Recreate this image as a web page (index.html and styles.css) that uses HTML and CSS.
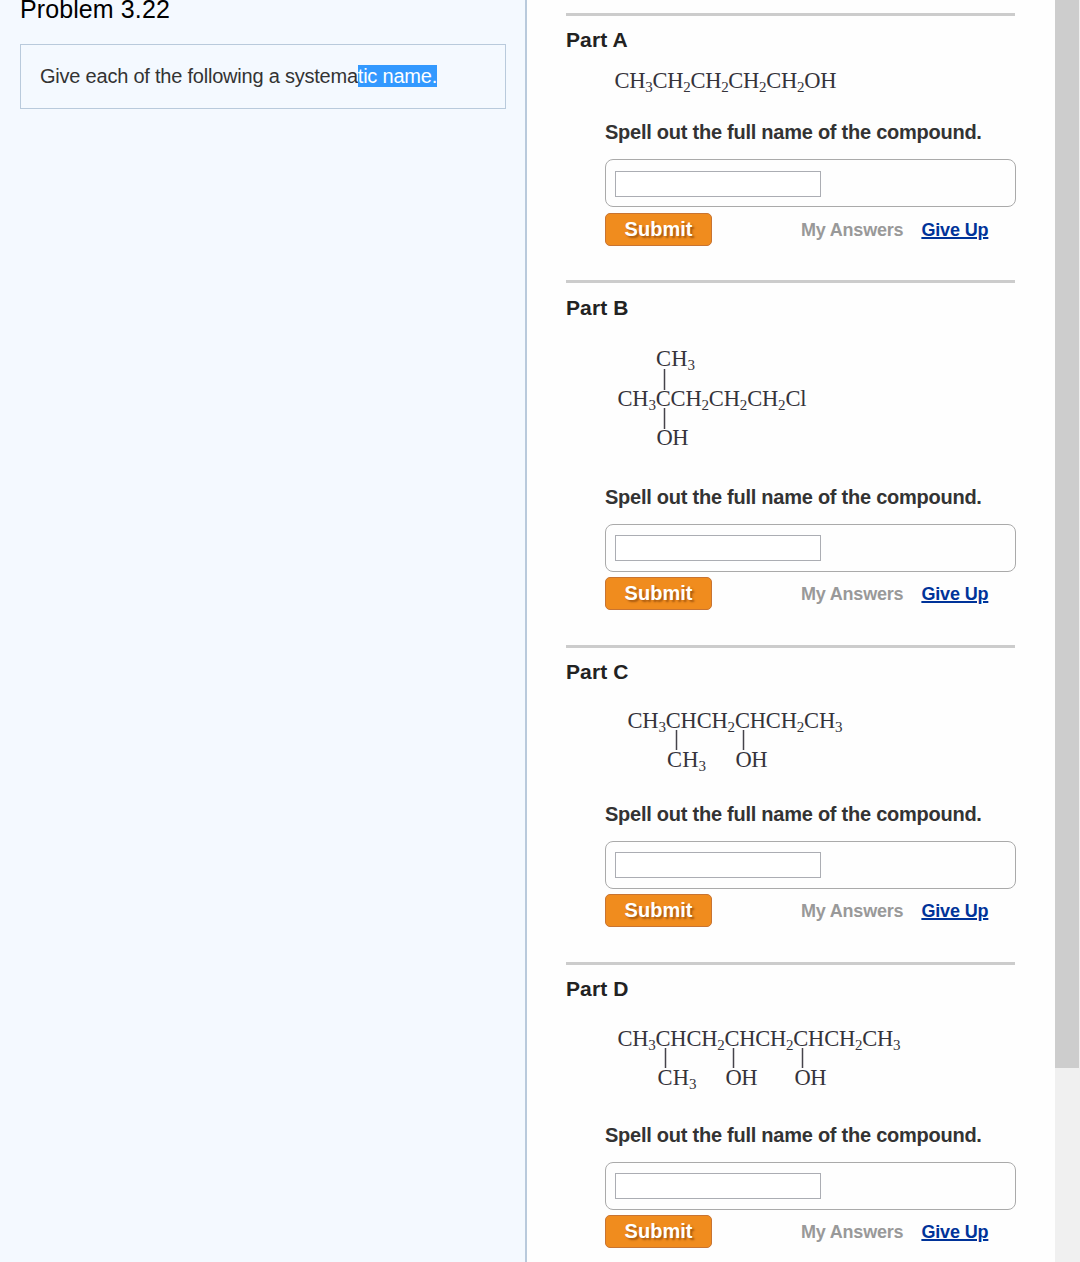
FILE: index.html
```html
<!DOCTYPE html>
<html lang="en">
<head>
    <meta charset="utf-8">
    <title>Problem 3.22</title>
    <link rel="stylesheet" href="styles.css">
</head>
<body>
    <div class="page">
        <div class="intro">
            <h1>Problem 3.22</h1>
            <div class="intro-box">Give each of the following a systema<span class="selected">tic name.</span></div>
        </div>

        <div class="parts">
            <div class="part part-a">
                <h2>Part A</h2>
                <div class="part-body">
                    <svg class="formula" width="411" height="68">
                        <text x="9.5" y="36" textLength="222">CH<tspan class="sub" dy="4">3</tspan><tspan dy="-4">CH</tspan><tspan class="sub" dy="4">2</tspan><tspan dy="-4">CH</tspan><tspan class="sub" dy="4">2</tspan><tspan dy="-4">CH</tspan><tspan class="sub" dy="4">2</tspan><tspan dy="-4">CH</tspan><tspan class="sub" dy="4">2</tspan><tspan dy="-4">OH</tspan></text>
                    </svg>
                    <p>Spell out the full name of the compound.</p>
                    <div class="answer"><input type="text"></div>
                    <div class="actions">
                        <button type="submit">Submit</button>
                        <span class="my-answers">My Answers</span>
                        <a href="#">Give Up</a>
                    </div>
                </div>
            </div>

            <div class="part part-b">
                <h2>Part B</h2>
                <div class="part-body">
                    <svg class="formula" width="411" height="165">
                        <text x="51" y="46" textLength="39">CH<tspan class="sub" dy="4">3</tspan></text>
                        <line x1="59.5" y1="49" x2="59.5" y2="70"/>
                        <text x="12.5" y="86" textLength="189">CH<tspan class="sub" dy="4">3</tspan><tspan dy="-4">CCH</tspan><tspan class="sub" dy="4">2</tspan><tspan dy="-4">CH</tspan><tspan class="sub" dy="4">2</tspan><tspan dy="-4">CH</tspan><tspan class="sub" dy="4">2</tspan><tspan dy="-4">Cl</tspan></text>
                        <line x1="59.5" y1="88" x2="59.5" y2="109"/>
                        <text x="51.5" y="125" textLength="32">OH</text>
                    </svg>
                    <p>Spell out the full name of the compound.</p>
                    <div class="answer"><input type="text"></div>
                    <div class="actions">
                        <button type="submit">Submit</button>
                        <span class="my-answers">My Answers</span>
                        <a href="#">Give Up</a>
                    </div>
                </div>
            </div>

            <div class="part">
                <h2>Part C</h2>
                <div class="part-body">
                    <svg class="formula" width="411" height="118">
                        <text x="22.5" y="44" textLength="215">CH<tspan class="sub" dy="4">3</tspan><tspan dy="-4">CHCH</tspan><tspan class="sub" dy="4">2</tspan><tspan dy="-4">CHCH</tspan><tspan class="sub" dy="4">2</tspan><tspan dy="-4">CH</tspan><tspan class="sub" dy="4">3</tspan></text>
                        <line x1="71.5" y1="46" x2="71.5" y2="66"/>
                        <line x1="138.5" y1="46" x2="138.5" y2="66"/>
                        <text x="62" y="83" textLength="39">CH<tspan class="sub" dy="4">3</tspan></text>
                        <text x="130.5" y="83" textLength="32">OH</text>
                    </svg>
                    <p>Spell out the full name of the compound.</p>
                    <div class="answer"><input type="text"></div>
                    <div class="actions">
                        <button type="submit">Submit</button>
                        <span class="my-answers">My Answers</span>
                        <a href="#">Give Up</a>
                    </div>
                </div>
            </div>

            <div class="part">
                <h2>Part D</h2>
                <div class="part-body">
                    <svg class="formula" width="411" height="122">
                        <text x="12.5" y="45" textLength="283">CH<tspan class="sub" dy="4">3</tspan><tspan dy="-4">CHCH</tspan><tspan class="sub" dy="4">2</tspan><tspan dy="-4">CHCH</tspan><tspan class="sub" dy="4">2</tspan><tspan dy="-4">CHCH</tspan><tspan class="sub" dy="4">2</tspan><tspan dy="-4">CH</tspan><tspan class="sub" dy="4">3</tspan></text>
                        <line x1="60.5" y1="47" x2="60.5" y2="67"/>
                        <line x1="128.5" y1="47" x2="128.5" y2="67"/>
                        <line x1="197.5" y1="47" x2="197.5" y2="67"/>
                        <text x="52.5" y="84" textLength="39">CH<tspan class="sub" dy="4">3</tspan></text>
                        <text x="120.5" y="84" textLength="32">OH</text>
                        <text x="189.5" y="84" textLength="32">OH</text>
                    </svg>
                    <p>Spell out the full name of the compound.</p>
                    <div class="answer"><input type="text"></div>
                    <div class="actions">
                        <button type="submit">Submit</button>
                        <span class="my-answers">My Answers</span>
                        <a href="#">Give Up</a>
                    </div>
                </div>
            </div>
        </div>

        <div class="scrollbar"><div class="thumb"></div></div>
    </div>
</body>
</html>
```

FILE: styles.css
```css
* {
    box-sizing: border-box;
}

body {
    margin: 0;
    font-family: "Liberation Sans", Arial, sans-serif;
    background-color: #fefefe;
}

.page {
    display: flex;
    height: 1262px;
    overflow: hidden;
}

.intro {
    width: 527px;
    padding: 0 19px 0 20px;
    background-color: #f4f9ff;
    border-right: 2px solid #b9cadc;
}

h1 {
    margin: 0 0 20px;
    font-size: 25px;
    font-weight: normal;
    line-height: 24px;
    height: 24px;
    margin-top: -3px;
    margin-bottom: 23px;
    letter-spacing: 0.1px;
    color: #000;
}

.intro-box {
    height: 65px;
    padding: 20px 19px;
    border: 1px solid #b9cadc;
    font-size: 20px;
    line-height: 23px;
    letter-spacing: -0.22px;
    color: #333;
    white-space: nowrap;
}

.selected {
    background-color: #3399ff;
    color: #fff;
}

.parts {
    width: 528px;
    padding: 13px 39px 0;
}

.part {
    width: 449px;
    border-top: 3px solid #ccc;
}

h2 {
    margin: 0;
    padding-top: 12px;
    font-size: 21px;
    line-height: 24px;
    letter-spacing: 0.1px;
    color: #222;
}

.part-b h2 {
    padding-top: 13px;
}

.part-body {
    width: 411px;
    margin-left: 39px;
}

.formula {
    display: block;
    font-family: "Liberation Serif", "Times New Roman", serif;
    font-size: 22.5px;
    fill: #35333a;
}

.formula .sub {
    font-size: 15px;
}

.formula line {
    stroke: #45434a;
    stroke-width: 1.5;
}

p {
    margin: 0 0 15px;
    font-size: 20px;
    font-weight: bold;
    line-height: 24px;
    letter-spacing: -0.25px;
    color: #333;
    white-space: nowrap;
}

.answer {
    height: 48px;
    padding: 10px 9px;
    border: 1px solid #aaa;
    border-radius: 8px;
}

.answer input {
    display: block;
    width: 206px;
    height: 26px;
    border: 1px solid #abadb3;
    background-color: #fff;
}

.actions {
    display: flex;
    align-items: center;
    margin: 5px 0 35px;
    font-size: 18px;
    font-weight: bold;
}

/* first part sits one pixel lower */
.part-a .answer {
    padding-top: 11px;
}

.part-a .actions {
    margin: 6px 0 34px;
}

button {
    width: 107px;
    height: 33px;
    padding: 0;
    border: 1px solid #c87432;
    border-radius: 5px;
    background-color: #f08c1e;
    font-family: inherit;
    font-size: 20px;
    font-weight: bold;
    color: #fff;
    text-shadow: 2px 2px 2px #a85a10;
}

.my-answers {
    margin-left: 89px;
    padding-top: 1px;
    letter-spacing: -0.2px;
    color: #999;
}

.actions a {
    margin-left: 18px;
    padding-top: 1px;
    letter-spacing: -0.15px;
    text-decoration-thickness: 2px;
    color: #003399;
}

.scrollbar {
    width: 25px;
    background-color: #f0f0f0;
}

.thumb {
    width: 24px;
    height: 1068px;
    background-color: #cdcdcd;
}
```
